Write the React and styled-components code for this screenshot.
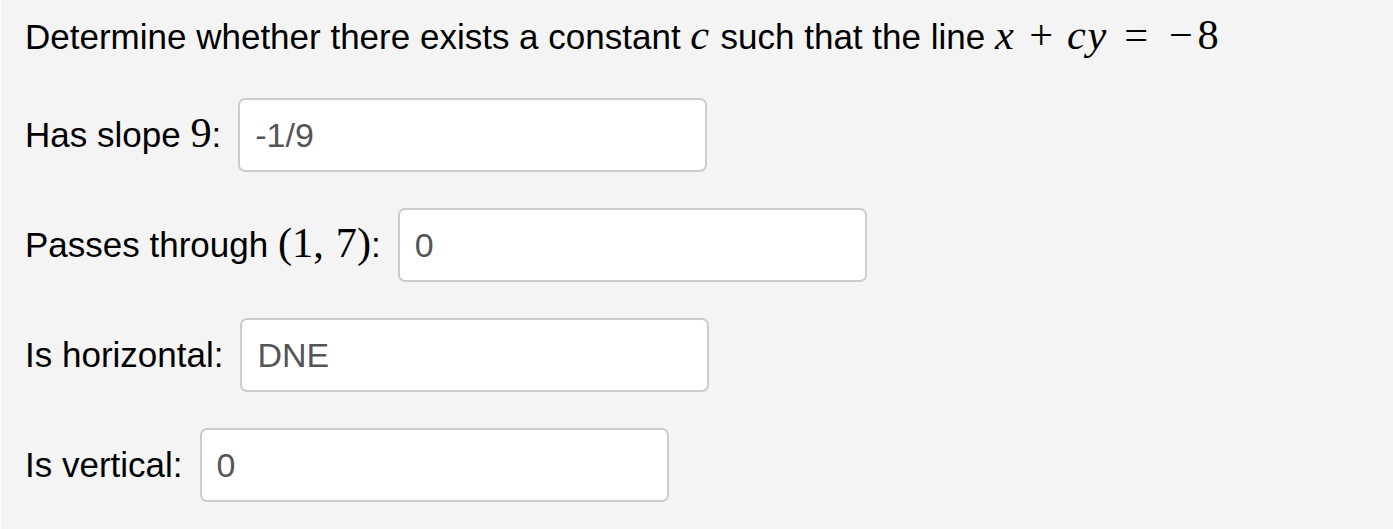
import React from "react";
import styled, { createGlobalStyle } from "styled-components";

const GlobalStyle = createGlobalStyle`
  html, body {
    margin: 0;
    padding: 0;
    background: #f4f4f4;
  }
`;

const rows = [
  { label: "Has slope ", math: "9", value: "-1/9" },
  { label: "Passes through ", math: "(1,\u2009\u200a7)", value: "0" },
  { label: "Is horizontal", math: null, value: "DNE" },
  { label: "Is vertical", math: null, value: "0" },
];

const App = () => {
  return (
    <Page>
      <GlobalStyle />
      <Question>
        Determine whether there exists a constant <Var>c</Var> such that the
        line{" "}
        <Math>
          <Var>x</Var>
          <Op>+</Op>
          <Var>c</Var>
          <Var>y</Var>
          <Op $rel>=</Op>
          <Op $tight>−</Op>
          <span>8</span>
        </Math>
      </Question>
      <Rows>
        {rows.map((r) => (
          <Row key={r.label}>
            <Label>
              {r.label}
              {r.math && <Math>{r.math}</Math>}:
            </Label>
            <Field defaultValue={r.value} />
          </Row>
        ))}
      </Rows>
    </Page>
  );
};

export default App;

const Page = styled.div`
  height: 529px;
  box-sizing: border-box;
  padding: 17px 24px 0;
  background: #f4f4f4;
  border-left: 1px solid #fbfbfb;
  font-family: "Liberation Sans", Arial, sans-serif;
  color: #000;
  overflow: hidden;
`;

const Question = styled.p`
  margin: 0 0 42px;
  font-size: 35px;
  line-height: 39px;
  white-space: nowrap;
`;

const Math = styled.span`
  font-family: "Liberation Serif", "Times New Roman", serif;
  font-size: 1.21em;
  line-height: 0;
`;

const Var = styled.span`
  font-family: "Liberation Serif", "Times New Roman", serif;
  font-style: italic;
  padding-right: 0.04em;
  ${Question} > & {
    font-size: 1.21em;
    line-height: 0;
  }
`;

const Op = styled.span`
  display: inline-block;
  width: 0.778em;
  text-align: center;
  margin: ${(p) => (p.$tight ? "0" : p.$rel ? "0 0.278em" : "0 0.222em")};
`;

const Rows = styled.div`
  display: flex;
  flex-direction: column;
  gap: 36px;
`;

const Row = styled.div`
  display: flex;
  align-items: center;
  gap: 17px;
`;

const Label = styled.label`
  font-size: 35px;
  white-space: nowrap;
`;

const Field = styled.input`
  width: 469px;
  height: 74px;
  box-sizing: border-box;
  padding: 0 15px;
  border: 2px solid #cccccc;
  border-radius: 7px;
  background: #fff;
  font-family: "Liberation Sans", Arial, sans-serif;
  font-size: 34px;
  color: #555;
  outline: none;
`;
